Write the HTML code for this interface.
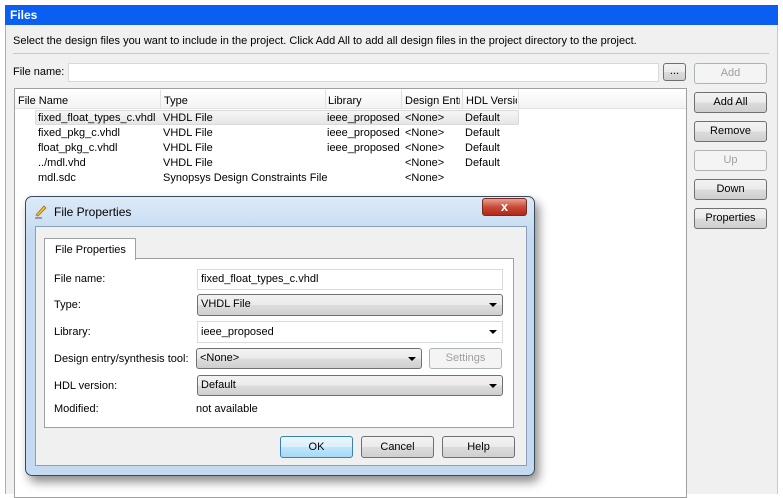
<!DOCTYPE html>
<html><head><meta charset="utf-8"><style>
*{box-sizing:border-box;margin:0;padding:0}
body{width:783px;height:494px;overflow:hidden;background:#fff;font-family:"Liberation Sans",sans-serif;font-size:11px;color:#000;position:relative}
.a{position:absolute}
.btn{position:absolute;border:1px solid #707070;border-radius:3px;background:linear-gradient(#f2f2f2,#ebebeb 50%,#dcdcdc 51%,#cfcfcf);text-align:center;font-size:11px;line-height:18px}
.dis{color:#a0a0a0;border-color:#adb2b5;background:#f4f4f4}
.inp{position:absolute;background:#fff;border:1px solid #abadb3;padding-left:3px;line-height:18px}
.sel{position:absolute;border:1px solid #707070;border-radius:3px;background:linear-gradient(#f2f2f2,#ebebeb 50%,#dddddd 51%,#cfcfcf);padding-left:3px;line-height:19px}
.arr{position:absolute;right:5px;top:8px;width:0;height:0;border-left:4px solid transparent;border-right:4px solid transparent;border-top:4px solid #000}
.row{position:absolute;left:38px;height:15px;line-height:15px;white-space:nowrap}
.row span{position:absolute}
</style></head><body>
<div class="a" style="left:5px;top:5px;width:773px;height:489px;background:#f0f0f0;border-left:1px solid #b0b0b0;border-right:1px solid #c8c8c8"></div>
<div class="a" style="left:5px;top:5px;width:773px;height:20px;background:#0a5ef2;color:#fff;font-weight:bold;font-size:12px;line-height:20px;padding-left:5px">Files</div>
<div class="a" style="left:13px;top:35px;white-space:nowrap">Select the design files you want to include in the project. Click Add All to add all design files in the project directory to the project.</div>
<div class="a" style="left:13px;top:53px;width:756px;height:1px;background:#c8c8c8"></div>
<div class="a" style="left:13px;top:66px">File name:</div>
<div class="inp" style="left:68px;top:63px;width:591px;height:19px;border-color:#d8d8d8"></div>
<div class="btn" style="left:663px;top:63px;width:23px;height:18px;line-height:14px">...</div>
<div class="btn dis" style="left:694px;top:63px;width:73px;height:21px">Add</div>
<div class="btn" style="left:694px;top:92px;width:73px;height:21px">Add All</div>
<div class="btn" style="left:694px;top:121px;width:73px;height:21px">Remove</div>
<div class="btn dis" style="left:694px;top:150px;width:73px;height:21px">Up</div>
<div class="btn" style="left:694px;top:179px;width:73px;height:21px">Down</div>
<div class="btn" style="left:694px;top:208px;width:73px;height:21px">Properties</div>
<div class="a" style="left:14px;top:88px;width:673px;height:410px;background:#fff;border:1px solid #a0a0a0"></div>
<div class="a" style="left:15px;top:89px;width:671px;height:20px;background:linear-gradient(#fff,#f3f3f3);border-bottom:1px solid #e0e0e0"></div>
<div class="a" style="left:18px;top:95px">File Name</div>
<div class="a" style="left:160px;top:90px;width:1px;height:19px;background:#e0e0e0"></div>
<div class="a" style="left:164px;top:95px">Type</div>
<div class="a" style="left:325px;top:90px;width:1px;height:19px;background:#e0e0e0"></div>
<div class="a" style="left:328px;top:95px">Library</div>
<div class="a" style="left:401px;top:90px;width:1px;height:19px;background:#e0e0e0"></div>
<div class="a" style="left:405px;top:95px;width:55px;overflow:hidden;white-space:nowrap">Design Entry</div>
<div class="a" style="left:462px;top:90px;width:1px;height:19px;background:#e0e0e0"></div>
<div class="a" style="left:466px;top:95px;width:51px;overflow:hidden;white-space:nowrap">HDL Version</div>
<div class="a" style="left:518px;top:90px;width:1px;height:19px;background:#e0e0e0"></div>
<div class="a" style="left:35px;top:110px;width:484px;height:15px;background:linear-gradient(#f6f6f6,#e6e6e6);border:1px solid #dadada;border-radius:2px"></div>
<div class="row" style="top:111px"><span style="left:0">fixed_float_types_c.vhdl</span><span style="left:125px">VHDL File</span><span style="left:289px">ieee_proposed</span><span style="left:367px">&lt;None&gt;</span><span style="left:427px">Default</span></div>
<div class="row" style="top:126px"><span style="left:0">fixed_pkg_c.vhdl</span><span style="left:125px">VHDL File</span><span style="left:289px">ieee_proposed</span><span style="left:367px">&lt;None&gt;</span><span style="left:427px">Default</span></div>
<div class="row" style="top:141px"><span style="left:0">float_pkg_c.vhdl</span><span style="left:125px">VHDL File</span><span style="left:289px">ieee_proposed</span><span style="left:367px">&lt;None&gt;</span><span style="left:427px">Default</span></div>
<div class="row" style="top:156px"><span style="left:0">../mdl.vhd</span><span style="left:125px">VHDL File</span><span style="left:367px">&lt;None&gt;</span><span style="left:427px">Default</span></div>
<div class="row" style="top:171px"><span style="left:0">mdl.sdc</span><span style="left:125px">Synopsys Design Constraints File</span><span style="left:367px">&lt;None&gt;</span></div>

<div class="a" style="left:25px;top:196px;width:510px;height:280px;border:1px solid #3a4a5a;border-radius:7px;background:linear-gradient(#dceaf8,#c4daf0 40px,#c4daf0);box-shadow:4px 6px 10px rgba(0,0,0,.45)"></div>
<svg class="a" style="left:33px;top:203px" width="16" height="16"><path d="M3 12 L11 3 L13 5 L5 13 Z" fill="#f0c030" stroke="#a07010" stroke-width=".8"/><path d="M2 15 H9" stroke="#555"/></svg>
<div class="a" style="left:54px;top:205px;font-size:12px">File Properties</div>
<div class="a" style="left:482px;top:198px;width:45px;height:18px;border:1px solid #7a2a20;border-radius:3px;background:linear-gradient(#e8a090,#c84a38 50%,#b02818);color:#fff;font-weight:bold;text-align:center;line-height:16px;font-size:13px">x</div>
<div class="a" style="left:35px;top:226px;width:492px;height:240px;background:#f0f0f0;border:1px solid #8aa0b8"></div>
<div class="a" style="left:44px;top:258px;width:470px;height:170px;background:#fff;border:1px solid #a0a0a0"></div>
<div class="a" style="left:44px;top:238px;width:92px;height:22px;background:#fff;border:1px solid #a0a0a0;border-bottom:none;padding:5px 0 0 10px">File Properties</div>
<div class="a" style="left:54px;top:273px">File name:</div>
<div class="inp" style="left:197px;top:269px;width:306px;height:21px;line-height:19px;border-color:#dadada">fixed_float_types_c.vhdl</div>
<div class="a" style="left:54px;top:299px">Type:</div>
<div class="sel" style="left:197px;top:294px;width:306px;height:22px">VHDL File<div class="arr"></div></div>
<div class="a" style="left:54px;top:326px">Library:</div>
<div class="inp" style="left:197px;top:321px;width:306px;height:22px;line-height:20px;border-color:#dadada">ieee_proposed<div class="arr"></div></div>
<div class="a" style="left:54px;top:353px">Design entry/synthesis tool:</div>
<div class="sel" style="left:196px;top:348px;width:226px;height:21px">&lt;None&gt;<div class="arr"></div></div>
<div class="btn dis" style="left:429px;top:348px;width:73px;height:21px">Settings</div>
<div class="a" style="left:54px;top:380px">HDL version:</div>
<div class="sel" style="left:197px;top:375px;width:306px;height:21px">Default<div class="arr"></div></div>
<div class="a" style="left:54px;top:403px">Modified:</div>
<div class="a" style="left:196px;top:403px">not available</div>
<div class="btn" style="left:280px;top:436px;width:73px;height:22px;border-color:#3c7fb1;background:linear-gradient(#eaf6fd,#d9f0fc 50%,#bee6fd 51%,#a7d9f5);line-height:20px">OK</div>
<div class="btn" style="left:361px;top:436px;width:73px;height:22px;line-height:20px">Cancel</div>
<div class="btn" style="left:442px;top:436px;width:73px;height:22px;line-height:20px">Help</div>
</body></html>
